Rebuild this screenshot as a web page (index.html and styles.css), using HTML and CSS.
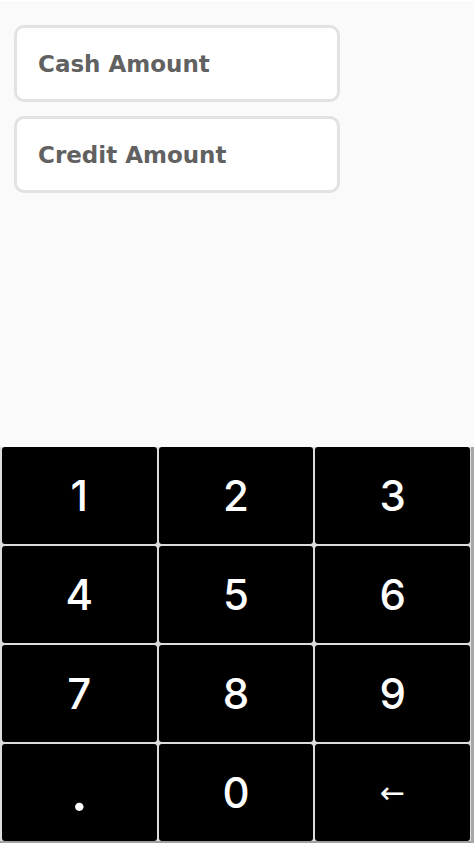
FILE: index.html
```html
<!DOCTYPE html>
<html>
<head>
<meta charset="utf-8">
<link rel="stylesheet" href="styles.css">
</head>
<body>
<div class="screen">
  <div class="fields">
    <div class="field"><span class="placeholder">Cash Amount</span></div>
    <div class="field"><span class="placeholder">Credit Amount</span></div>
  </div>
  <div class="keypad">
    <div class="key">1</div>
    <div class="key">2</div>
    <div class="key">3</div>
    <div class="key">4</div>
    <div class="key">5</div>
    <div class="key">6</div>
    <div class="key">7</div>
    <div class="key">8</div>
    <div class="key">9</div>
    <div class="key dot">.</div>
    <div class="key">0</div>
    <div class="key back">←</div>
  </div>
</div>
</body>
</html>
```
FILE: styles.css
```css
html, body {
  margin: 0;
  padding: 0;
  height: 100%;
}
body {
  background: #fafafa;
  font-family: "Inter", "Liberation Sans", sans-serif;
}
.screen {
  height: 843px;
  display: flex;
  flex-direction: column;
  border-top: 1px solid #ffffff;
  box-sizing: border-box;
}
.fields {
  display: flex;
  flex-direction: column;
  gap: 14px;
  padding: 24px 0 0 14px;
}
.field {
  width: 326px;
  height: 77px;
  box-sizing: border-box;
  border: 3px solid #e2e2e2;
  border-radius: 10px;
  background: #ffffff;
  display: flex;
  align-items: center;
  padding-left: 21px;
}
.placeholder {
  font-family: "DejaVu Sans", sans-serif;
  font-size: 23px;
  font-weight: 700;
  color: #616161;
  letter-spacing: 0;
  padding-top: 1px;
}
.keypad {
  margin-top: auto;
  height: 396px;
  box-sizing: border-box;
  display: grid;
  grid-template-columns: repeat(3, 1fr);
  grid-template-rows: repeat(4, 97px);
  gap: 2px;
  padding: 0 1px 2px 2px;
  background: #dcdcdc;
  border-right: 3px solid #a8a8a8;
  box-shadow: inset 0 -2px 0 #a0a0a0;
}
.key {
  background: #000000;
  border-radius: 3px;
  color: #ffffff;
  font-size: 42px;
  font-weight: 500;
  display: flex;
  align-items: center;
  justify-content: center;
}
.key.dot {
  font-size: 58px;
  padding-bottom: 6px;
  box-sizing: border-box;
}
.key.back {
  font-size: 30px;
  font-family: "DejaVu Sans", sans-serif;
}
```
